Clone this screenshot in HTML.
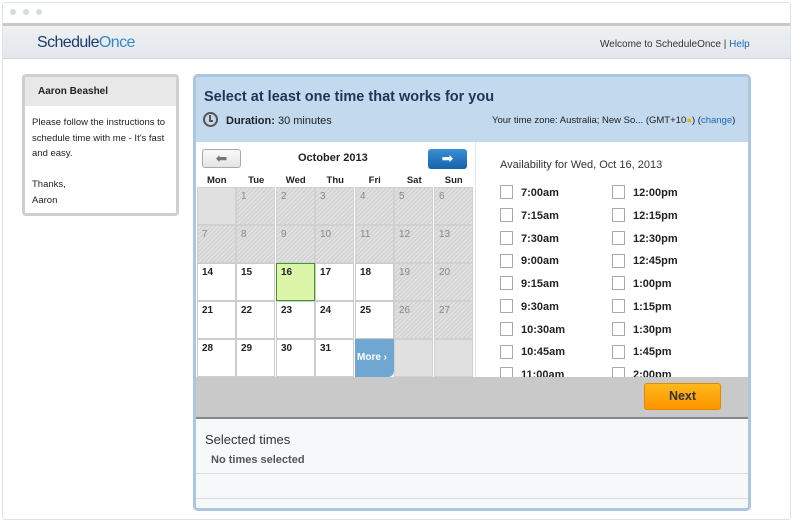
<!DOCTYPE html>
<html><head><meta charset="utf-8"><style>
*{box-sizing:border-box;margin:0;padding:0}
body{width:800px;height:528px;background:#fff;font-family:"Liberation Sans",sans-serif;position:relative;overflow:hidden;font-size:11px;color:#222}
.a{position:absolute}
.cell{position:absolute;width:39px;height:38px;border:1px solid #ccc;font-size:10px;padding:3px 0 0 4px;background:#fff;font-weight:bold;color:#222}
.dis{color:#888;font-weight:normal;border-color:#d0d0d0}
.hatch{background:repeating-linear-gradient(135deg,#cfcfcf 0 1px,#e0e0e0 1px 3px)}
.cb{position:absolute;width:13px;height:14px;border:1px solid #aaa;background:#fff}
.t{position:absolute;font-size:11px;font-weight:bold;color:#222}
</style></head><body>
<div class="a" style="left:2px;top:2px;width:789px;height:518px;border:1px solid #dde3ea;border-radius:3px"></div>
<div class="a" style="left:10px;top:9px;width:6px;height:6px;border-radius:3px;background:#d6dbe0"></div>
<div class="a" style="left:23px;top:9px;width:6px;height:6px;border-radius:3px;background:#d6dbe0"></div>
<div class="a" style="left:36px;top:9px;width:6px;height:6px;border-radius:3px;background:#d6dbe0"></div>
<div class="a" style="left:3px;top:23px;width:787px;height:36px;background:linear-gradient(#eef0f2,#e4e8ec);border-top:3px solid #c8c8c8;border-bottom:1px solid #ccd6e0"></div>
<div class="a" style="left:37px;top:34px;font-size:16px;letter-spacing:-0.6px"><span style="color:#1f3a6e">Schedule</span><span style="color:#3b86c8">Once</span></div>
<div class="a" style="left:600px;top:39px;font-size:10px;color:#333">Welcome to ScheduleOnce | <span style="color:#2266bb">Help</span></div>

<div class="a" style="left:22px;top:74px;width:157px;height:142px;border:3px solid #cfcfcf;border-radius:4px;background:#fff"></div>
<div class="a" style="left:25px;top:77px;width:151px;height:29px;background:#e8e8e8"></div>
<div class="a" style="left:38px;top:86px;font-size:10px;font-weight:bold">Aaron Beashel</div>
<div class="a" style="left:32px;top:115px;font-size:9.5px;line-height:15.5px;color:#222">Please follow the instructions to<br>schedule time with me - It's fast<br>and easy.<br><br>Thanks,<br>Aaron</div>

<div class="a" style="left:193px;top:74px;width:558px;height:437px;border:3px solid #a9c6e2;border-radius:5px;background:#f7f8fa"></div>
<div class="a" style="left:196px;top:77px;width:552px;height:65px;background:#c2d9ee"></div>
<div class="a" style="left:204px;top:89px;font-size:14.5px;font-weight:bold;color:#1d3557">Select at least one time that works for you</div>
<div class="a" style="left:203px;top:112px;width:15px;height:15px;border:2px solid #555;border-radius:50%"></div>
<div class="a" style="left:209px;top:115px;width:2px;height:6px;background:#555"></div>
<div class="a" style="left:209px;top:120px;width:4px;height:2px;background:#555"></div>
<div class="a" style="left:226px;top:115px;font-size:11px"><b>Duration:</b> 30 minutes</div>
<div class="a" style="left:492px;top:115px;font-size:9.5px">Your time zone: Australia; New So... (GMT+10<span style="color:#f2b400">●</span>) (<span style="color:#2266bb">change</span>)</div>

<div class="a" style="left:196px;top:142px;width:552px;height:235px;background:#fff"></div>
<div class="a" style="left:202px;top:149px;width:39px;height:19px;border:1px solid #aaa;border-radius:3px;background:linear-gradient(#fafafa,#e4e4e4);color:#777;text-align:center;font-size:14px;line-height:17px">&#x2B05;</div>
<div class="a" style="left:298px;top:152px;font-size:11px;font-weight:bold">October 2013</div>
<div class="a" style="left:428px;top:149px;width:39px;height:20px;border-radius:3px;background:linear-gradient(#3a8fd6,#1662ad);color:#fff;text-align:center;font-size:14px;line-height:19px">&#x27A1;</div>
<div class="a" style="left:197px;top:175px;width:277px;font-size:9.5px;font-weight:bold;display:flex">
<span style="width:39.5px;text-align:center">Mon</span><span style="width:39.5px;text-align:center">Tue</span><span style="width:39.5px;text-align:center">Wed</span><span style="width:39.5px;text-align:center">Thu</span><span style="width:39.5px;text-align:center">Fri</span><span style="width:39.5px;text-align:center">Sat</span><span style="width:39.5px;text-align:center">Sun</span></div>
<div class="cell" style="left:197px;top:187px;background:#e0e0e0;border-color:#d0d0d0"></div>
<div class="cell dis hatch" style="left:236px;top:187px">1</div><div class="cell dis hatch" style="left:276px;top:187px">2</div><div class="cell dis hatch" style="left:315px;top:187px">3</div><div class="cell dis hatch" style="left:355px;top:187px">4</div><div class="cell dis hatch" style="left:394px;top:187px">5</div><div class="cell dis hatch" style="left:434px;top:187px">6</div>
<div class="cell dis hatch" style="left:197px;top:225px">7</div><div class="cell dis hatch" style="left:236px;top:225px">8</div><div class="cell dis hatch" style="left:276px;top:225px">9</div><div class="cell dis hatch" style="left:315px;top:225px">10</div><div class="cell dis hatch" style="left:355px;top:225px">11</div><div class="cell dis hatch" style="left:394px;top:225px">12</div><div class="cell dis hatch" style="left:434px;top:225px">13</div>
<div class="cell" style="left:197px;top:263px">14</div><div class="cell" style="left:236px;top:263px">15</div><div class="cell" style="left:276px;top:263px;background:#dcf5a8;border:1px solid #3a9a2a">16</div><div class="cell" style="left:315px;top:263px">17</div><div class="cell" style="left:355px;top:263px">18</div><div class="cell dis hatch" style="left:394px;top:263px">19</div><div class="cell dis hatch" style="left:434px;top:263px">20</div>
<div class="cell" style="left:197px;top:301px">21</div><div class="cell" style="left:236px;top:301px">22</div><div class="cell" style="left:276px;top:301px">23</div><div class="cell" style="left:315px;top:301px">24</div><div class="cell" style="left:355px;top:301px">25</div><div class="cell dis hatch" style="left:394px;top:301px">26</div><div class="cell dis hatch" style="left:434px;top:301px">27</div>
<div class="cell" style="left:197px;top:339px">28</div><div class="cell" style="left:236px;top:339px">29</div><div class="cell" style="left:276px;top:339px">30</div><div class="cell" style="left:315px;top:339px">31</div>
<div class="a" style="left:355px;top:339px;width:39px;height:38px;background:#6fa7d2;border-radius:0 0 6px 0;color:#fff;font-weight:bold;font-size:10px;padding:13px 0 0 2px">More ›</div>
<div class="cell" style="left:394px;top:339px;background:#e0e0e0;border-color:#d0d0d0"></div><div class="cell" style="left:434px;top:339px;background:#e0e0e0;border-color:#d0d0d0"></div>
<div class="a" style="left:475px;top:142px;width:1px;height:235px;background:#e4e4e4"></div>
<div class="a" style="left:500px;top:159px;font-size:11px;color:#333">Availability for Wed, Oct 16, 2013</div>

<div class="cb" style="left:500px;top:185px"></div><div class="t" style="left:521px;top:187px">7:00am</div>
<div class="cb" style="left:500px;top:208px"></div><div class="t" style="left:521px;top:210px">7:15am</div>
<div class="cb" style="left:500px;top:231px"></div><div class="t" style="left:521px;top:233px">7:30am</div>
<div class="cb" style="left:500px;top:254px"></div><div class="t" style="left:521px;top:255px">9:00am</div>
<div class="cb" style="left:500px;top:276px"></div><div class="t" style="left:521px;top:278px">9:15am</div>
<div class="cb" style="left:500px;top:299px"></div><div class="t" style="left:521px;top:301px">9:30am</div>
<div class="cb" style="left:500px;top:322px"></div><div class="t" style="left:521px;top:324px">10:30am</div>
<div class="cb" style="left:500px;top:345px"></div><div class="t" style="left:521px;top:346px">10:45am</div>
<div class="cb" style="left:500px;top:367px"></div><div class="t" style="left:521px;top:369px">11:00am</div>
<div class="cb" style="left:612px;top:185px"></div><div class="t" style="left:633px;top:187px">12:00pm</div>
<div class="cb" style="left:612px;top:208px"></div><div class="t" style="left:633px;top:210px">12:15pm</div>
<div class="cb" style="left:612px;top:231px"></div><div class="t" style="left:633px;top:233px">12:30pm</div>
<div class="cb" style="left:612px;top:254px"></div><div class="t" style="left:633px;top:255px">12:45pm</div>
<div class="cb" style="left:612px;top:276px"></div><div class="t" style="left:633px;top:278px">1:00pm</div>
<div class="cb" style="left:612px;top:299px"></div><div class="t" style="left:633px;top:301px">1:15pm</div>
<div class="cb" style="left:612px;top:322px"></div><div class="t" style="left:633px;top:324px">1:30pm</div>
<div class="cb" style="left:612px;top:345px"></div><div class="t" style="left:633px;top:346px">1:45pm</div>
<div class="cb" style="left:612px;top:367px"></div><div class="t" style="left:633px;top:369px">2:00pm</div>

<div class="a" style="left:196px;top:377px;width:552px;height:42px;background:#c9c9c9;border-bottom:2px solid #888"></div>
<div class="a" style="left:644px;top:383px;width:77px;height:27px;border-radius:3px;background:linear-gradient(#ffb81a,#ff9400);border:1px solid #e08a00;text-align:center;font-size:12.5px;font-weight:bold;color:#333;line-height:25px">Next</div>
<div class="a" style="left:205px;top:432px;font-size:13px;color:#333">Selected times</div>
<div class="a" style="left:211px;top:454px;font-size:11px;font-weight:bold;color:#555">No times selected</div>
<div class="a" style="left:196px;top:473px;width:552px;height:1px;background:#ddd"></div>
<div class="a" style="left:196px;top:498px;width:552px;height:1px;background:#ddd"></div>
</body></html>
